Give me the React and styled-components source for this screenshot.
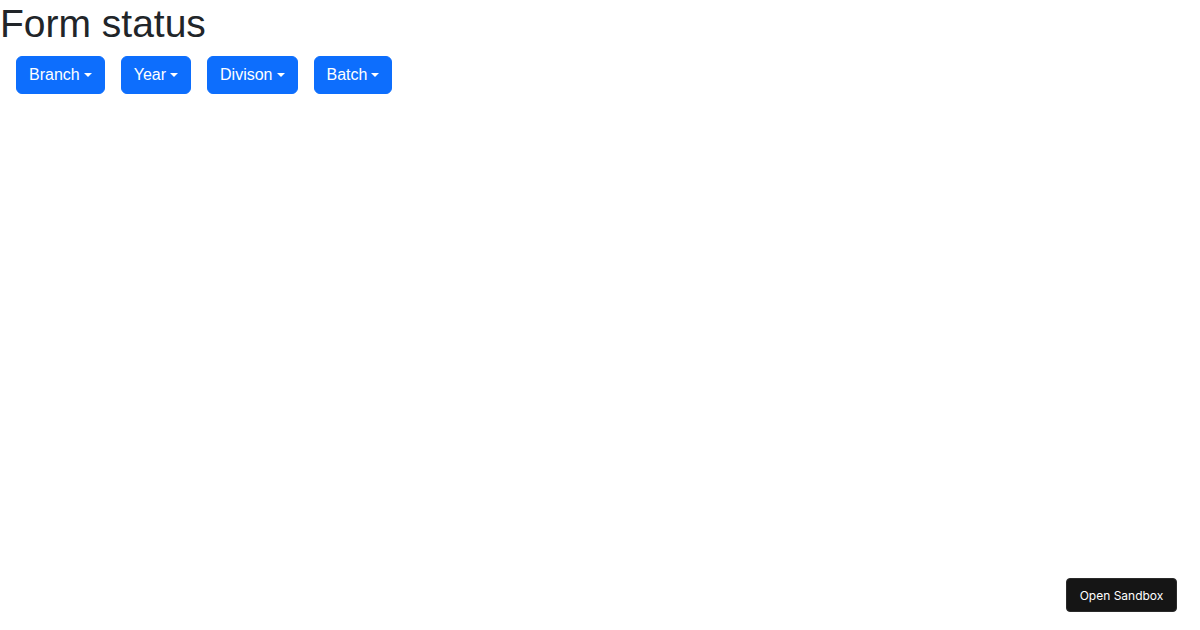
import styled, { createGlobalStyle } from 'styled-components';

const GlobalStyle = createGlobalStyle`
  body {
    margin: 0;
    font-family: "Liberation Sans", Arial, sans-serif;
    color: #212529;
    background: #fff;
  }
`;

const Page = styled.div`
  min-height: 630px;
  position: relative;
`;

const Title = styled.h1`
  margin: 0 0 8px;
  font-size: 39px;
  font-weight: 500;
  line-height: 48px;
  color: #212529;
`;

const Filters = styled.div`
  display: flex;
  gap: 16px;
  padding-left: 16px;
`;

const Toggle = styled.button`
  display: inline-flex;
  align-items: center;
  height: 38px;
  padding: 6px 12px;
  border: 1px solid #0d6efd;
  border-radius: 6px;
  background: #0d6efd;
  color: #fff;
  font-family: "Liberation Sans", Arial, sans-serif;
  font-size: 16px;
  line-height: 24px;
  cursor: pointer;

  &::after {
    content: '';
    display: inline-block;
    margin-left: 4px;
    border-top: 4.8px solid currentColor;
    border-right: 4.8px solid transparent;
    border-left: 4.8px solid transparent;
    border-bottom: 0;
  }
`;

const SandboxButton = styled.button`
  position: fixed;
  right: 23px;
  bottom: 18px;
  width: 111px;
  height: 34px;
  border: 1px solid #2a2a2a;
  border-radius: 4px;
  background: #151515;
  color: #fff;
  font-family: Inter, "Liberation Sans", sans-serif;
  font-size: 12px;
  cursor: pointer;
`;

const filters = ['Branch', 'Year', 'Divison', 'Batch'];

const App = () => (
  <Page>
    <GlobalStyle />
    <Title>Form status</Title>
    <Filters>
      {filters.map((name) => (
        <Toggle key={name} type="button">{name}</Toggle>
      ))}
    </Filters>
    <SandboxButton type="button">Open Sandbox</SandboxButton>
  </Page>
);

export default App;
